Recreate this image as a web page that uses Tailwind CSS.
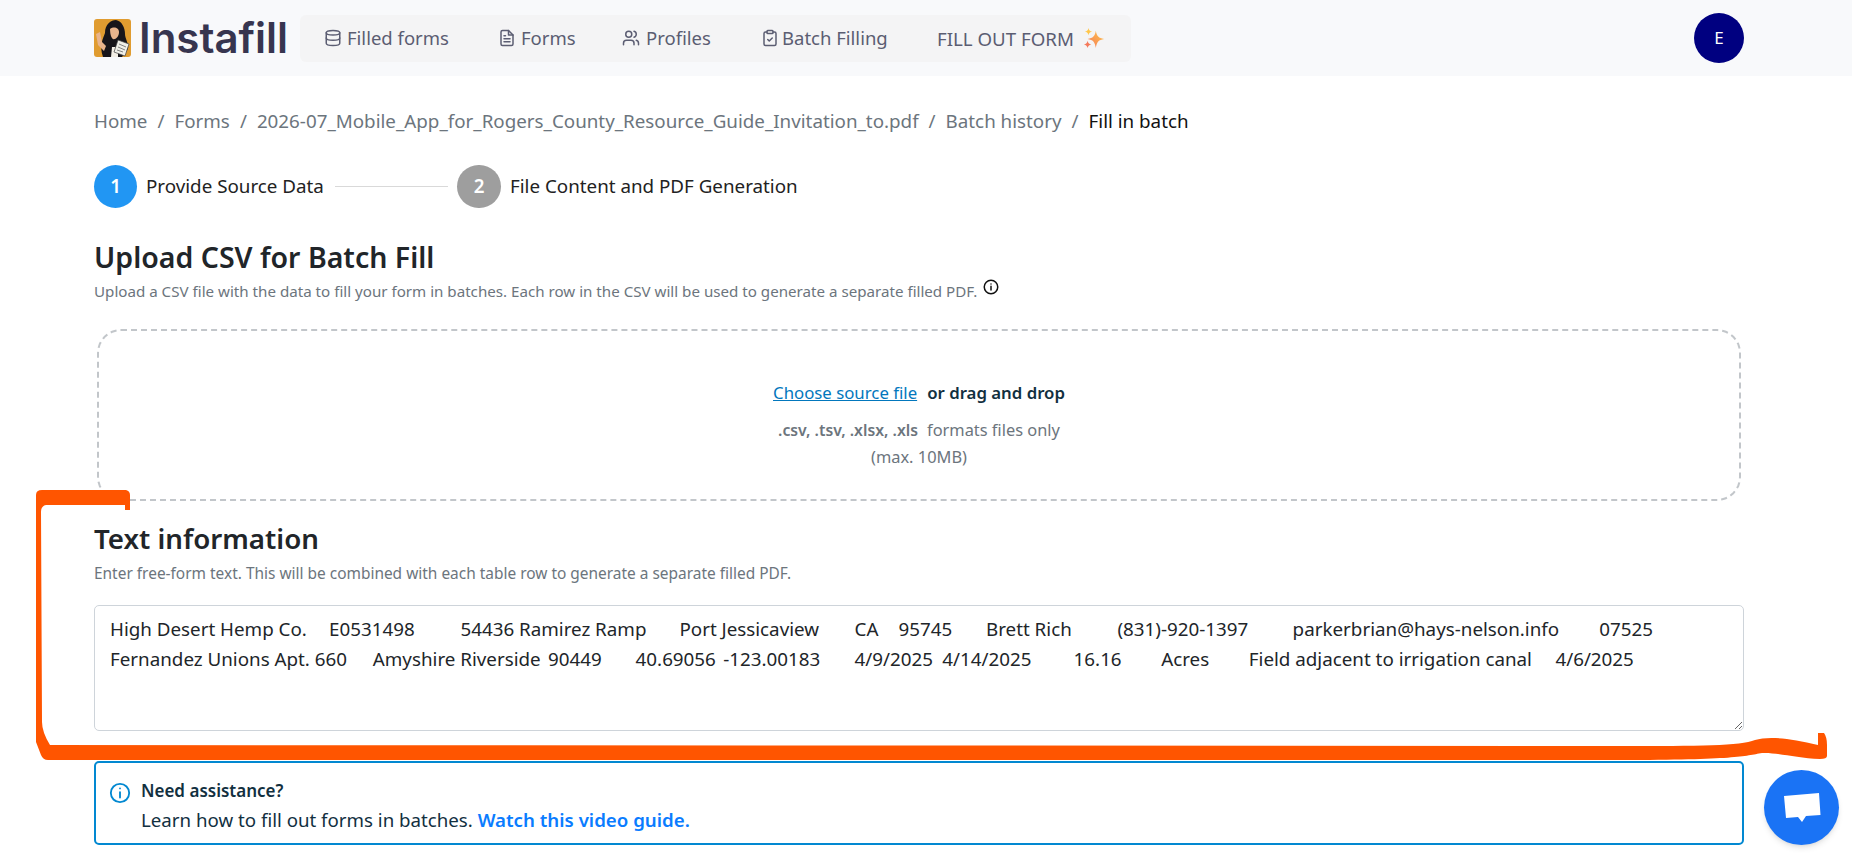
<!DOCTYPE html>
<html lang="en">
<head>
<meta charset="utf-8">
<title>Instafill</title>
<script src="https://cdn.jsdelivr.net/npm/@tailwindcss/browser@4"></script>
</head>
<body class="relative h-[863px] overflow-hidden bg-white font-['Noto_Sans',sans-serif] text-[#212529]">
<header class="flex h-[76px] items-center bg-[#f8f9fb] pl-[94px] pr-[108px]">
  <svg class="h-[38px] w-[37px] shrink-0" viewBox="0 0 37 38">
    <rect width="37" height="38" rx="3" fill="#e09c30"/>
    <path d="M9 38 C5 26 9 20 11 14 C11 5 17 1 22 1 C28 2 31 9 31 15 C31 20 35 24 34 30 L28 38 Z" fill="#17151a"/>
    <path d="M16 10 C20 7 25 9 25 13 C25 18 21 21 19 20 C17 19 16 14 16 10 Z" fill="#e8b48c"/>
    <path d="M17 38 L18 28 L24 28 L24 38 Z" fill="#f3efe6"/>
    <path d="M2 15 L6 13 L8 23 L12 27 L10 32 L4 26 Z" fill="#e8b48c"/>
    <path d="M24 21 L35 25 L31 37 L20 33 Z" fill="#efefe8" stroke="#444" stroke-width=".7"/>
    <path d="M25 25 L32 28 M24 28 L31 31 M23 31 L29 33" stroke="#666" stroke-width=".8"/>
  </svg>
  <span class="ml-[8px] w-[161px] font-['Inter',sans-serif] text-[42px] leading-none font-semibold text-[#37354f]">Instafill</span>
  <nav class="flex h-[47px] w-[831px] items-center rounded-md bg-[#f4f4f5] pl-[24px] text-[18.5px] text-[#5b5d72]">
    <svg class="h-[18px] w-[18px] shrink-0" viewBox="0 0 24 24" fill="none" stroke="currentColor" stroke-width="2" stroke-linecap="round" stroke-linejoin="round"><ellipse cx="12" cy="5" rx="9" ry="3"/><path d="M3 5v14c0 1.7 4 3 9 3s9-1.300 9-3V5"/><path d="M3 12c0 1.700 4 3 9 3s9-1.300 9-3"/></svg>
    <span class="ml-[5px] w-[151px]">Filled forms</span>
    <svg class="h-[18px] w-[18px] shrink-0" viewBox="0 0 24 24" fill="none" stroke="currentColor" stroke-width="2" stroke-linecap="round" stroke-linejoin="round"><path d="M14 2H6a2 2 0 0 0-2 2v16a2 2 0 0 0 2 2h12a2 2 0 0 0 2-2V8z"/><path d="M14 2v6h6"/><path d="M16 13H8M16 17H8M10 9H8"/></svg>
    <span class="ml-[5px] w-[101px]">Forms</span>
    <svg class="h-[18px] w-[18px] shrink-0" viewBox="0 0 24 24" fill="none" stroke="currentColor" stroke-width="2" stroke-linecap="round" stroke-linejoin="round"><path d="M16 21v-2a4 4 0 0 0-4-4H6a4 4 0 0 0-4 4v2"/><circle cx="9" cy="7" r="4"/><path d="M22 21v-2a4 4 0 0 0-3-3.870M16 3.130a4 4 0 0 1 0 7.750"/></svg>
    <span class="ml-[6px] w-[115px]">Profiles</span>
    <svg class="h-[18px] w-[18px] shrink-0" viewBox="0 0 24 24" fill="none" stroke="currentColor" stroke-width="2" stroke-linecap="round" stroke-linejoin="round"><rect x="8" y="2" width="8" height="4" rx="1"/><path d="M16 4h2a2 2 0 0 1 2 2v14a2 2 0 0 1-2 2H6a2 2 0 0 1-2-2V6a2 2 0 0 1 2-2h2"/><path d="m9 14 2 2 4-4"/></svg>
    <span class="ml-[3px] w-[155px]">Batch Filling</span>
    <span class="mt-[2px] w-[146px] text-[18.7px]">FILL OUT FORM</span>
    <svg class="h-[22px] w-[22px] shrink-0" viewBox="0 0 24 24">
      <defs><linearGradient id="s" x1="0" y1="1" x2="1" y2="0"><stop offset="0" stop-color="#f4795b"/><stop offset="1" stop-color="#ffc64a"/></linearGradient></defs>
      <path d="M14 4 C15 10 17 12 23 13 C17 14 15 16 14 23 C13 16 11 14 5 13 C11 12 13 10 14 4 Z" fill="url(#s)"/>
      <path d="M6 1 C6.500 3.500 7.500 4.500 10 5 C7.500 5.500 6.500 6.500 6 9 C5.500 6.500 4.500 5.500 2 5 C4.500 4.500 5.500 3.500 6 1 Z" fill="#ffc64a"/>
      <path d="M5 15 C5.500 17.500 6.500 18.500 9 19 C6.500 19.500 5.500 20.500 5 23 C4.500 20.500 3.500 19.500 1 19 C3.500 18.500 4.500 17.500 5 15 Z" fill="#f4795b"/>
    </svg>
  </nav>
  <div class="ml-auto flex h-[50px] w-[50px] items-center justify-center rounded-full bg-[#000080] text-[17px] text-white">E</div>
</header>

<main class="px-[94px]">
  <nav class="mt-[32px] flex h-[26px] items-center gap-[10px] text-[18.8px] leading-[26px] text-[#6c757d]">
    <span>Home</span><span>/</span><span>Forms</span><span>/</span><span>2026-07_Mobile_App_for_Rogers_County_Resource_Guide_Invitation_to.pdf</span><span>/</span><span>Batch history</span><span>/</span><span class="text-[#111]">Fill in batch</span>
  </nav>

  <div class="mt-[31px] flex h-[43px] items-center text-[18.8px] text-[#222]">
    <span class="flex h-[43px] w-[43px] items-center justify-center rounded-full bg-[#2196f3] font-semibold text-white">1</span>
    <span class="ml-[9px] w-[179px]">Provide Source Data</span>
    <span class="ml-[10px] h-px w-[113px] bg-[#d9d9d9]"></span>
    <span class="ml-[9px] flex h-[43px] w-[44px] items-center justify-center rounded-full bg-[#9e9e9e] font-semibold text-white">2</span>
    <span class="ml-[9px]">File Content and PDF Generation</span>
  </div>

  <h2 class="mt-[27px] text-[28.5px] leading-[44px] font-semibold text-[#212529]">Upload CSV for Batch Fill</h2>
  <div class="flex h-[24px] items-center text-[15.15px] leading-[24px] text-[#6c757d]">
    <span>Upload a CSV file with the data to fill your form in batches. Each row in the CSV will be used to generate a separate filled PDF.</span>
    <svg class="mb-[8px] ml-[5px] h-[18px] w-[18px]" viewBox="0 0 24 24" fill="none" stroke="#111" stroke-width="2" stroke-linecap="round"><circle cx="12" cy="12" r="9"/><path d="M12 11v5M12 8h.01"/></svg>
  </div>

  <section class="mx-[3px] mt-[26px] flex h-[172px] w-[1644px] flex-col items-center rounded-[24px] border-2 border-dashed border-[#c2c6ca] pt-[49px] text-[16.4px] text-[#6c757d]">
    <p class="text-[16.8px] leading-[26px]"><a class="text-[#0277bd] underline">Choose source file</a><span class="ml-[10px] font-semibold text-[#12303f]">or drag and drop</span></p>
    <p class="mt-[11px] leading-[26px]"><span class="text-[15.8px] font-semibold">.csv, .tsv, .xlsx, .xls</span><span class="ml-[9px]">formats files only</span></p>
    <p class="leading-[28px]">(max. 10MB)</p>
  </section>

  <h2 class="mt-[19px] text-[27.7px] leading-[36px] font-semibold text-[#212529]">Text information</h2>
  <p class="mt-[5px] text-[15.45px] leading-[24px] text-[#6c757d]">Enter free-form text. This will be combined with each table row to generate a separate filled PDF.</p>

  <textarea class="mt-[20px] block h-[126px] w-[1650px] resize-y rounded-[5px] border border-[#ced4da] px-[15px] py-[8px] text-[18.8px] leading-[30px] text-[#212529] [tab-size:43.8px]" wrap="off">High Desert Hemp Co.	E0531498	54436 Ramirez Ramp	Port Jessicaview	CA	95745	Brett Rich	(831)-920-1397	parkerbrian@hays-nelson.info	07525
Fernandez Unions Apt. 660	Amyshire Riverside	90449	40.69056	-123.00183	4/9/2025	4/14/2025	16.16	Acres	Field adjacent to irrigation canal	4/6/2025</textarea>

  <aside class="mt-[30px] flex h-[84px] w-[1650px] rounded-[5px] border-2 border-[#0288d1] pl-[13px] text-[18.7px]">
    <svg class="mt-[19px] h-[22px] w-[22px] shrink-0" viewBox="0 0 24 24" fill="none" stroke="#0288d1" stroke-width="2" stroke-linecap="round"><circle cx="12" cy="12" r="10"/><path d="M12 11v6M12 7h.01"/></svg>
    <div class="ml-[10px] pt-[13px] leading-[29px] text-[#12303f]">
      <p class="text-[17px] font-semibold">Need assistance?</p>
      <p>Learn how to fill out forms in batches. <a class="font-semibold text-[#0a7cff]">Watch this video guide.</a></p>
    </div>
  </aside>
</main>

<svg class="pointer-events-none absolute top-0 left-0 h-[863px] w-[1852px]" viewBox="0 0 1852 863" fill="none">
  <path fill="#ff5500" d="M42 490 L126 490 Q130 491 130 495 L130 510 L125 510 L125 505 L46 505 Q41 506 41 512 L42 722 Q42 732 50 745 L1620 746 C1700 746 1740 746 1755 740 C1768 736 1790 738 1818 745 L1818 733 L1824 733 Q1827 737 1827 745 L1827 756 Q1827 759 1820 759 C1795 758 1775 752 1762 753 C1745 756 1735 760 1620 760 L48 760 Q43 760 41 755 L36 742 L36 495 Q36 490 42 490 Z"/>
</svg>

<div class="absolute top-[770px] left-[1764px] flex h-[75px] w-[75px] items-center justify-center rounded-full bg-[#1a73f5] shadow-md">
  <svg class="h-[32px] w-[38px]" viewBox="0 0 38 32"><path d="M1 4 L36 1 L37.500 23 L23 24 L19 30 L15 25 L3 26 Z" fill="#fff"/></svg>
</div>
</body>
</html>
